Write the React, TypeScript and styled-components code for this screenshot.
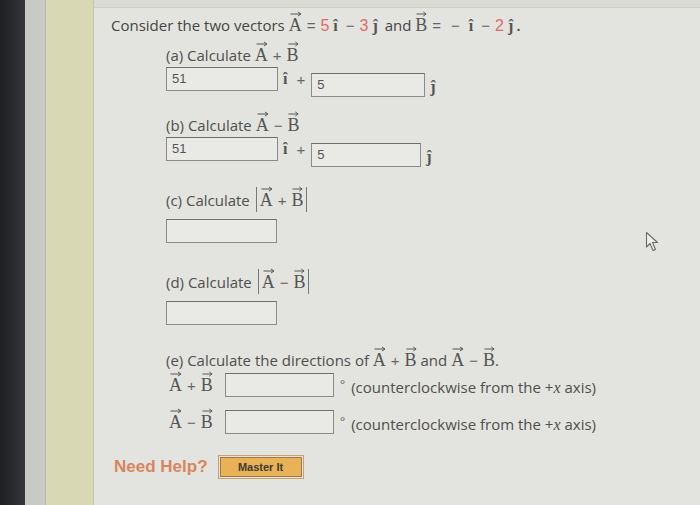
import { createGlobalStyle, styled } from 'styled-components';
import { ReactNode } from 'react';

const GlobalStyle = createGlobalStyle`
  html, body {
    margin: 0;
    padding: 0;
    background: #e3e4df;
  }
  body {
    font-family: 'Open Sans', 'DejaVu Sans', sans-serif;
    color: #4a4a4a;
  }
`;

const Vec = ({ children }: { children: ReactNode }) => (
  <VecWrap>
    <VecArrow viewBox="0 0 12 6" preserveAspectRatio="none">
      <path d="M0.5 3 H10.5 M8 1 L11 3 L8 5" stroke="#555" strokeWidth="1" fill="none" />
    </VecArrow>
    {children}
  </VecWrap>
);

const Sum = ({ op }: { op: string }) => (
  <Math>
    <Vec>A</Vec>
    <Op>{op}</Op>
    <Vec>B</Vec>
  </Math>
);

const App = () => {
  return (
    <>
      <GlobalStyle />
      <Screen>
        <Bezel />
        <Gutter />
        <SideBar />
        <Main>
          <TopBand />
          <Question>
            <Title>
              Consider the two vectors{' '}
              <Math>
                <Vec>A</Vec>
                <Op>=</Op>
                <Red>5</Red>
                <Unit>î</Unit>
                <Op>−</Op>
                <Red>3</Red>
                <Unit>ĵ</Unit>
              </Math>{' '}
              and{' '}
              <Math>
                <Vec>B</Vec>
                <Op>=</Op>
                <Op>−</Op>
                <Unit>î</Unit>
                <Op>−</Op>
                <Red>2</Red>
                <Unit>ĵ</Unit>.
              </Math>
            </Title>

            <Part $top={4}>
              <Label>
                (a) Calculate <Sum op="+" />
              </Label>
              <Row $gap={-1}>
                <Box $w={112}>51</Box>
                <Unit>î</Unit>
                <Op>+</Op>
                <Box $w={114} $shift={6}>5</Box>
                <Unit $shift={8}>ĵ</Unit>
              </Row>
            </Part>

            <Part $top={22}>
              <Label>
                (b) Calculate <Sum op="−" />
              </Label>
              <Row $gap={-1}>
                <Box $w={112}>51</Box>
                <Unit>î</Unit>
                <Op>+</Op>
                <Box $w={110} $shift={6}>5</Box>
                <Unit $shift={8}>ĵ</Unit>
              </Row>
            </Part>

            <Part $top={26}>
              <Label>
                (c) Calculate{' '}
                <Abs>
                  <Sum op="+" />
                </Abs>
              </Label>
              <Row $gap={7}>
                <Box $w={111} />
              </Row>
            </Part>

            <Part $top={26}>
              <Label>
                (d) Calculate{' '}
                <Abs>
                  <Sum op="−" />
                </Abs>
              </Label>
              <Row $gap={7}>
                <Box $w={111} />
              </Row>
            </Part>

            <Part $top={23}>
              <Label>
                (e) Calculate the directions of <Sum op="+" /> and <Sum op="−" />.
              </Label>
              <AngleRow>
                <AngleName>
                  <Sum op="+" />
                </AngleName>
                <Box $w={109} />
                <Degree>°</Degree>
                <Note>(counterclockwise from the +<i>x</i> axis)</Note>
              </AngleRow>
              <AngleRow>
                <AngleName>
                  <Sum op="−" />
                </AngleName>
                <Box $w={109} />
                <Degree>°</Degree>
                <Note>(counterclockwise from the +<i>x</i> axis)</Note>
              </AngleRow>
            </Part>

            <Help>
              <HelpText>Need Help?</HelpText>
              <MasterButton type="button">Master It</MasterButton>
            </Help>
          </Question>
          <Cursor viewBox="0 0 16 22">
            <path d="M1.5 1.5 L1.5 16 L5 12.5 L8 19.5 L10.5 18.5 L7.5 11.5 L12.5 11.5 Z" fill="#eeeee9" stroke="#6a6a6a" strokeWidth="1.1" strokeLinejoin="round" />
          </Cursor>
        </Main>
      </Screen>
    </>
  );
};

export default App;

const Screen = styled.div`
  display: flex;
  width: 700px;
  height: 505px;
  overflow: hidden;
`;

const Bezel = styled.div`
  width: 25px;
  flex-shrink: 0;
  background: linear-gradient(90deg, #1f2023, #34363a);
`;

const Gutter = styled.div`
  width: 20px;
  flex-shrink: 0;
  background: #c9cac6;
  border-right: 1px solid #b8b8aa;
`;

const SideBar = styled.div`
  width: 47px;
  flex-shrink: 0;
  background: #d8d8b4;
  border-right: 1px solid #c4c4a6;
`;

const Main = styled.div`
  position: relative;
  flex: 1;
  display: flex;
  flex-direction: column;
  background: #e3e4df;
`;

const TopBand = styled.div`
  height: 7px;
  background: #dbdbd6;
  border-bottom: 1px solid #cfcfca;
`;

const Question = styled.div`
  display: flex;
  flex-direction: column;
  padding: 4px 0 0 17px;
`;

const Title = styled.div`
  font-size: 15px;
  line-height: 26px;
  color: #454545;
  white-space: nowrap;
`;

const Math = styled.span`
  font-family: 'Liberation Serif', 'DejaVu Serif', serif;
  font-size: 18px;
  white-space: nowrap;
`;

const VecWrap = styled.span`
  position: relative;
  display: inline-block;
  line-height: 1;
  color: #555;
`;

const VecArrow = styled.svg`
  position: absolute;
  left: 1px;
  top: -5px;
  width: calc(100% - 1px);
  height: 6px;
`;

const Op = styled.span`
  margin: 0 5px;
  color: #666;
  font-family: 'Liberation Sans', sans-serif;
  font-size: 15px;
`;

const Red = styled.span`
  color: #e26a63;
  font-family: 'Liberation Sans', sans-serif;
  font-size: 16px;
`;

const Unit = styled.span<{ $shift?: number }>`
  font-family: 'Liberation Serif', serif;
  font-weight: 700;
  font-size: 16px;
  color: #555;
  margin: 0 3px 0 4px;
  position: relative;
  top: ${(p) => p.$shift ?? 0}px;
`;

const Part = styled.div<{ $top: number }>`
  display: flex;
  flex-direction: column;
  margin: ${(p) => p.$top}px 0 0 55px;
`;

const Label = styled.div`
  font-size: 15px;
  line-height: 24px;
  color: #4f4f4f;
  white-space: nowrap;
`;

const Abs = styled.span`
  display: inline-block;
  padding: 2px 3px 0;
  border-left: 1px solid #777;
  border-right: 1px solid #777;
  line-height: 22px;
  margin-left: 2px;
`;

const Row = styled.div<{ $gap?: number }>`
  display: flex;
  align-items: center;
  gap: 1px;
  margin-top: ${(p) => p.$gap ?? 0}px;
`;

const Box = styled.div<{ $w: number; $shift?: number }>`
  box-sizing: border-box;
  width: ${(p) => p.$w}px;
  height: 24px;
  padding: 2px 5px;
  border: 1px solid #8a8a8a;
  border-top-color: #6f6f6f;
  background: #e9eae6;
  font-family: 'Liberation Sans', sans-serif;
  font-size: 13px;
  line-height: 18px;
  color: #555;
  position: relative;
  top: ${(p) => p.$shift ?? 0}px;
`;

const AngleRow = styled.div`
  display: flex;
  align-items: center;
  height: 38px;
  margin-top: -7px;
  & + & {
    margin-top: -1px;
  }
`;

const AngleName = styled.div`
  width: 56px;
  padding-left: 3px;
`;

const Degree = styled.span`
  margin: 0 6px 0 6px;
  font-size: 12px;
  color: #666;
  align-self: flex-start;
  padding-top: 10px;
`;

const Note = styled.span`
  font-size: 15px;
  color: #4f4f4f;
  padding-top: 4px;
  i {
    font-family: 'Liberation Serif', serif;
    font-size: 16px;
  }
`;

const Help = styled.div`
  display: flex;
  align-items: center;
  gap: 12px;
  margin: 16px 0 0 3px;
`;

const HelpText = styled.span`
  font-family: 'Liberation Sans', Arial, sans-serif;
  font-weight: 700;
  font-size: 17px;
  color: #d8845c;
`;

const MasterButton = styled.button`
  width: 82px;
  height: 20px;
  padding: 0;
  border: 1px solid #a27a4a;
  outline: 1px solid #c9a070;
  outline-offset: 1px;
  background: #e9b256;
  font-family: 'Liberation Sans', Arial, sans-serif;
  font-weight: 700;
  font-size: 11px;
  color: #3d3a35;
`;

const Cursor = styled.svg`
  position: absolute;
  left: 551px;
  top: 231px;
  width: 16px;
  height: 22px;
`;
